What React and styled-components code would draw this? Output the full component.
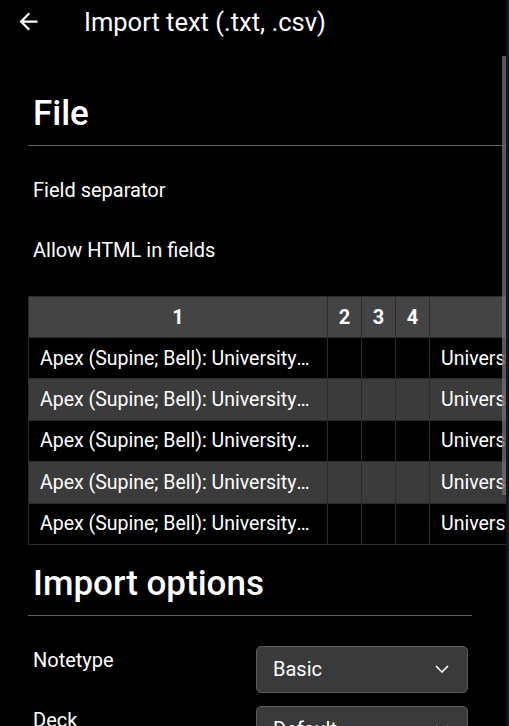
import React from 'react';
import styled, { createGlobalStyle } from 'styled-components';

const GlobalStyle = createGlobalStyle`
  html, body {
    margin: 0;
    padding: 0;
    background: #000000;
  }
  body {
    font-family: Roboto, "Noto Sans", "Liberation Sans", sans-serif;
    color: #ffffff;
  }
`;

const Page = styled.div`
  position: relative;
  width: 509px;
  height: 726px;
  overflow: hidden;
  background: #000000;
`;

const Header = styled.header`
  display: flex;
  align-items: center;
  height: 43px;
  padding-left: 15px;
`;

const BackButton = styled.button`
  display: flex;
  align-items: center;
  justify-content: center;
  width: 27px;
  height: 27px;
  padding: 0;
  border: none;
  background: transparent;
  color: #ffffff;
  cursor: pointer;
`;

const Title = styled.h1`
  margin: 0 0 0 42px;
  font-size: 25.5px;
  font-weight: 400;
  line-height: 30px;
  color: #ffffff;
  white-space: nowrap;
`;

const Content = styled.main`
  padding: 49px 0 0 28px;
`;

const Section = styled.section`
  width: ${(p) => (p.$wide ? 'max-content' : '444px')};
  margin-bottom: ${(p) => p.$gap || 0}px;
`;

const SectionTitle = styled.h2`
  margin: 0;
  padding-left: 5px;
  font-size: 35px;
  font-weight: 500;
  line-height: 43px;
  color: #ffffff;
`;

const Divider = styled.hr`
  margin: 10px 0 0;
  border: none;
  border-top: 1px solid #5e5e5e;
`;

const OptionList = styled.div`
  display: flex;
  flex-direction: column;
  padding: 14px 0 16px;
`;

const OptionRow = styled.div`
  display: flex;
  align-items: center;
  height: 60px;
  padding-left: 5px;
  font-size: 20px;
  line-height: 24px;
`;

const Table = styled.table`
  width: ${(p) => p.$w}px;
  border-collapse: collapse;
  table-layout: fixed;
  font-size: 19.5px;
  color: #ffffff;
`;

const HeadCell = styled.th`
  height: 40px;
  padding: 0;
  background: #444444;
  border: 1px solid #2c2c2c;
  font-size: 20px;
  font-weight: 700;
  text-align: center;
`;

const Row = styled.tr`
  background: ${(p) => (p.$odd ? '#3b3b3b' : '#000000')};
`;

const Cell = styled.td`
  height: 40.4px;
  padding: 0 13px 0 11px;
  border: 1px solid #2c2c2c;
  white-space: nowrap;
  overflow: hidden;
  text-overflow: ellipsis;
`;

const OptionsGrid = styled.div`
  display: grid;
  grid-template-columns: 1fr 212px;
  row-gap: 13px;
  padding: 30px 4px 0 5px;
`;

const FieldLabel = styled.label`
  padding-top: 2px;
  font-size: 20px;
  line-height: 24px;
`;

const Select = styled.div`
  display: flex;
  align-items: center;
  justify-content: space-between;
  box-sizing: border-box;
  height: 47px;
  padding: 0 18px 0 16px;
  background: #3a3a3a;
  border: 1px solid #5c5c5c;
  border-radius: 5px;
  font-size: 20px;
  color: #ffffff;
`;

const Scrollbar = styled.div`
  position: absolute;
  top: 0;
  right: 0;
  width: 3px;
  height: 100%;
  background: #15151b;
`;

const ScrollThumb = styled.div`
  position: absolute;
  top: 56px;
  right: 3px;
  width: 4px;
  height: 439px;
  background: rgba(110, 110, 110, 0.8);
`;

const ArrowBack = () => (
  <svg width="27" height="27" viewBox="0 0 24 24" fill="currentColor">
    <path d="M20 11H7.83l5.59-5.59L12 4l-8 8 8 8 1.41-1.41L7.83 13H20v-2z" />
  </svg>
);

const Chevron = () => (
  <svg width="14" height="8" viewBox="0 0 14 8" fill="none" stroke="#ffffff" strokeWidth="1.6">
    <path d="M1 1l6 6 6-6" />
  </svg>
);

const columns = [
  { label: '1', w: 299 },
  { label: '2', w: 34 },
  { label: '3', w: 34 },
  { label: '4', w: 34 },
  { label: '', w: 200 },
];

const tableWidth = columns.reduce((sum, c) => sum + c.w, 0);

const rows = Array.from({ length: 5 }, () => [
  'Apex (Supine; Bell): University Hospital',
  '',
  '',
  '',
  'University Hospital',
]);

const App = () => (
  <Page>
    <GlobalStyle />
    <Header>
      <BackButton aria-label="Back">
        <ArrowBack />
      </BackButton>
      <Title>Import text (.txt, .csv)</Title>
    </Header>

    <Content>
      <Section $wide $gap={17}>
        <SectionTitle>File</SectionTitle>
        <Divider />
        <OptionList>
          <OptionRow>Field separator</OptionRow>
          <OptionRow>Allow HTML in fields</OptionRow>
        </OptionList>
        <Table $w={tableWidth}>
          <colgroup>
            {columns.map((c, i) => (
              <col key={i} style={{ width: c.w }} />
            ))}
          </colgroup>
          <thead>
            <tr>
              {columns.map((c, i) => (
                <HeadCell key={i}>{c.label}</HeadCell>
              ))}
            </tr>
          </thead>
          <tbody>
            {rows.map((r, i) => (
              <Row key={i} $odd={i % 2 === 1}>
                {r.map((v, j) => (
                  <Cell key={j}>{v}</Cell>
                ))}
              </Row>
            ))}
          </tbody>
        </Table>
      </Section>

      <Section>
        <SectionTitle>Import options</SectionTitle>
        <Divider />
        <OptionsGrid>
          <FieldLabel>Notetype</FieldLabel>
          <Select>
            <span>Basic</span>
            <Chevron />
          </Select>
          <FieldLabel>Deck</FieldLabel>
          <Select>
            <span>Default</span>
            <Chevron />
          </Select>
        </OptionsGrid>
      </Section>
    </Content>

    <Scrollbar />
    <ScrollThumb />
  </Page>
);

export default App;
